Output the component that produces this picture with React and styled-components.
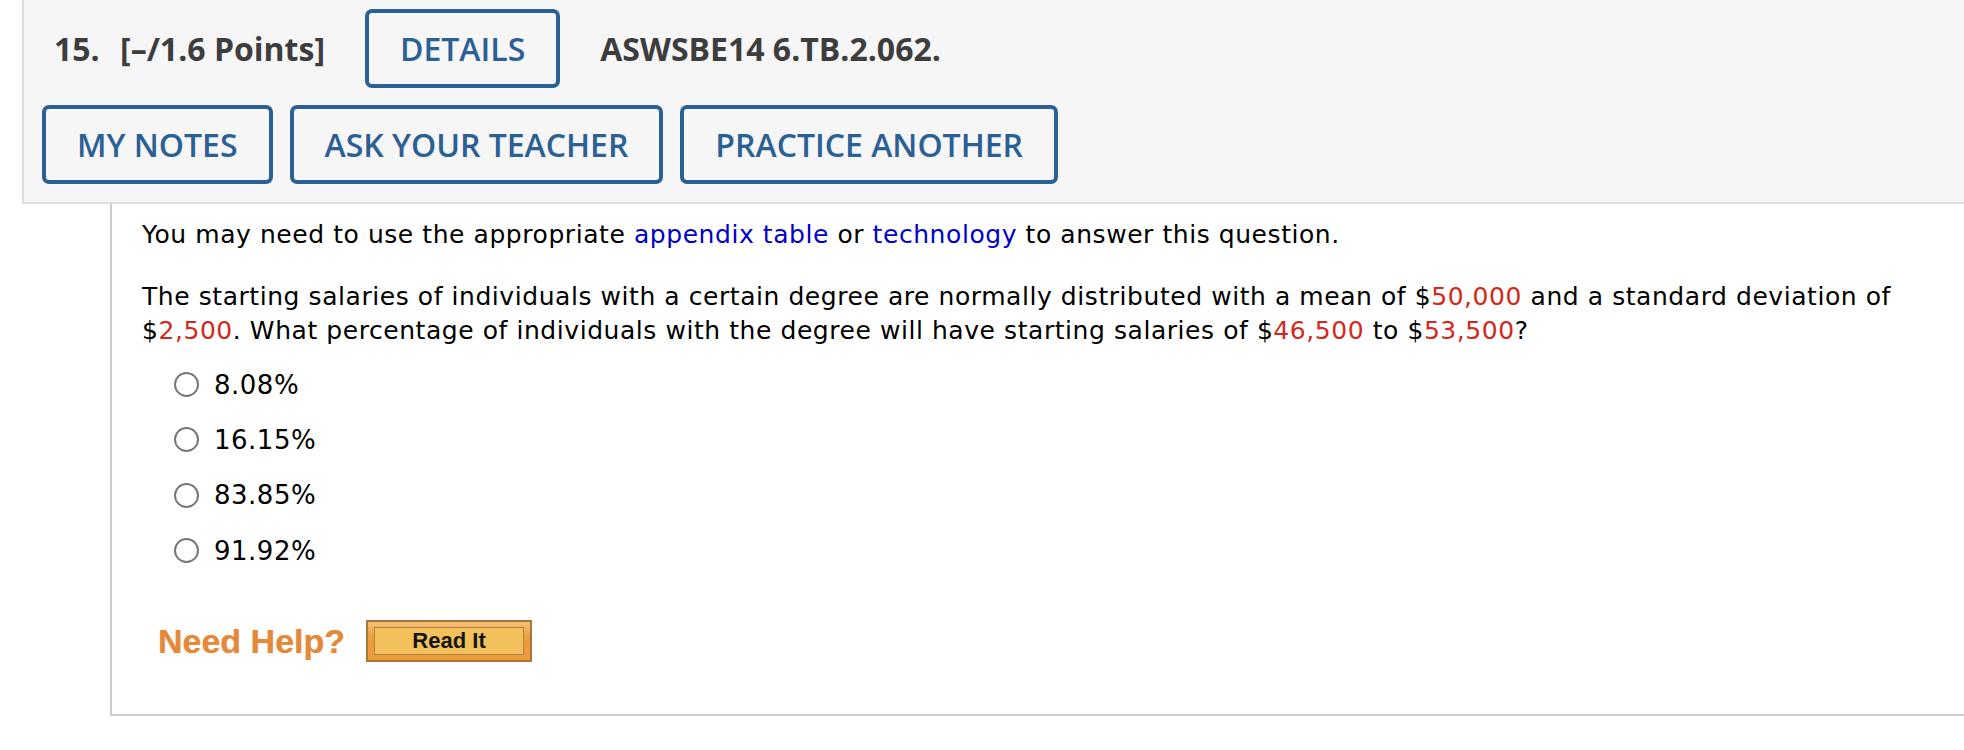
import styled, { createGlobalStyle } from "styled-components"

const GlobalStyle = createGlobalStyle`
  html, body {
    margin: 0;
    padding: 0;
    background: #fff;
    overflow: hidden;
  }
`

const Page = styled.div`
  width: 1964px;
  height: 750px;
  font-family: "Open Sans", "Liberation Sans", sans-serif;
`

const Header = styled.div`
  margin-left: 22px;
  padding: 9px 0 18px 18px;
  background: #f6f6f6;
  border-left: 2px solid #dedede;
  border-bottom: 2px solid #dedede;
`

const TopRow = styled.div`
  display: flex;
  align-items: center;
  gap: 40px;
`

const ActionRow = styled.div`
  display: flex;
  align-items: center;
  gap: 17px;
  margin-top: 17px;
`

const QTitle = styled.div`
  margin-left: 12px;
  font-size: 32px;
  font-weight: 700;
  color: #3d3d3d;
  white-space: pre;
  .num {
    margin-right: 12px;
  }
`

const Code = styled.div`
  font-size: 32px;
  font-weight: 700;
  color: #3d3d3d;
`

const OutlineButton = styled.button`
  box-sizing: border-box;
  height: 79px;
  display: inline-flex;
  align-items: center;
  padding: 0 31px;
  background: transparent;
  border: 4px solid #2b6095;
  border-radius: 7px;
  font-family: "Open Sans", "Liberation Sans", sans-serif;
  font-size: 32px;
  font-weight: 600;
  color: #2b6095;
  cursor: pointer;
`

const Body = styled.div`
  margin-left: 110px;
  padding: 14px 64px 52px 30px;
  border-left: 2px solid #cccccc;
  border-bottom: 2px solid #cccccc;
  font-family: Verdana, "DejaVu Sans", sans-serif;
  font-size: 25px;
  letter-spacing: 0.56px;
  line-height: 34px;
  color: #000;
`

const Para = styled.p`
  margin: 0 0 28px;
  &:last-of-type {
    margin-bottom: 0;
  }
`

const Link = styled.a`
  color: #0000cc;
  text-decoration: none;
`

const Val = styled.span`
  color: #d2291c;
`

const Options = styled.div`
  margin: 9px 0 0 32px;
  display: flex;
  flex-direction: column;
`

const Option = styled.label`
  height: 55.3px;
  display: flex;
  align-items: center;
  gap: 15px;
  font-size: 26px;
  letter-spacing: 0.5px;
`

const Radio = styled.span`
  box-sizing: border-box;
  width: 25px;
  height: 25px;
  border-radius: 50%;
  border: 2px solid #777;
  background: #fff;
  flex: none;
`

const HelpRow = styled.div`
  display: flex;
  align-items: center;
  gap: 21px;
  margin: 42px 0 0 16px;
`

const NeedHelp = styled.span`
  font-family: "Liberation Sans", Arial, sans-serif;
  font-size: 34px;
  font-weight: 700;
  letter-spacing: 0;
  color: #e4893a;
  text-shadow: 0 0 1px rgba(228, 137, 58, 0.6);
  line-height: 42px;
`

const ReadIt = styled.button`
  box-sizing: border-box;
  width: 166px;
  height: 42px;
  padding: 5px 6px;
  border: 2px solid #a8763a;
  background: linear-gradient(#f6c07a, #ec9d40 40%, #eb9a3c);
  cursor: pointer;
  display: flex;
  span {
    flex: 1;
    display: flex;
    align-items: center;
    justify-content: center;
    border: 1px solid #b5843e;
    background: #f3c15b;
    font-family: "Liberation Sans", Arial, sans-serif;
    font-size: 22px;
    font-weight: 700;
    letter-spacing: 0;
    color: #151515;
  }
`

const choices = ["8.08%", "16.15%", "83.85%", "91.92%"]

export default function App() {
  return (
    <Page>
      <GlobalStyle />
      <Header>
        <TopRow>
          <QTitle>
            <span className="num">15.</span> [–/1.6 Points]
          </QTitle>
          <OutlineButton>DETAILS</OutlineButton>
          <Code>ASWSBE14 6.TB.2.062.</Code>
        </TopRow>
        <ActionRow>
          <OutlineButton>MY NOTES</OutlineButton>
          <OutlineButton>ASK YOUR TEACHER</OutlineButton>
          <OutlineButton>PRACTICE ANOTHER</OutlineButton>
        </ActionRow>
      </Header>
      <Body>
        <Para>
          You may need to use the appropriate <Link>appendix table</Link> or{" "}
          <Link>technology</Link> to answer this question.
        </Para>
        <Para>
          The starting salaries of individuals with a certain degree are normally
          distributed with a mean of $<Val>50,000</Val> and a standard deviation of
          $<Val>2,500</Val>. What percentage of individuals with the degree will have
          starting salaries of $<Val>46,500</Val> to $<Val>53,500</Val>?
        </Para>
        <Options>
          {choices.map((c) => (
            <Option key={c}>
              <Radio />
              {c}
            </Option>
          ))}
        </Options>
        <HelpRow>
          <NeedHelp>Need Help?</NeedHelp>
          <ReadIt>
            <span>Read It</span>
          </ReadIt>
        </HelpRow>
      </Body>
    </Page>
  )
}
